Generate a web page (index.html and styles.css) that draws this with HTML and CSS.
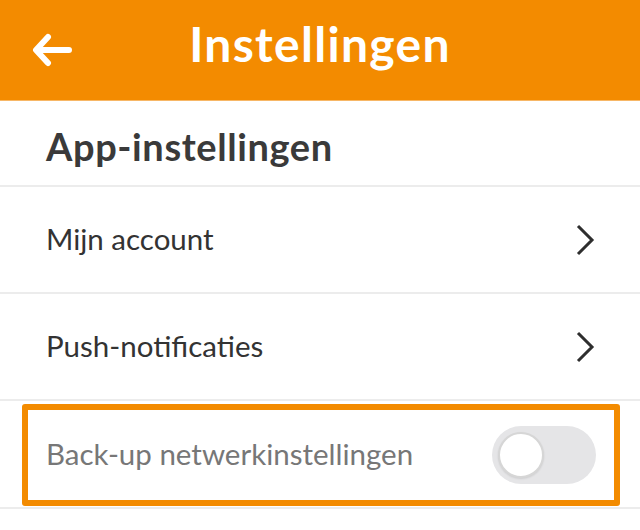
FILE: index.html
```html
<!DOCTYPE html>
<html lang="nl">
<head>
<meta charset="utf-8">
<link rel="stylesheet" href="styles.css">
</head>
<body>
<header class="topbar">
  <span class="back">
    <svg width="42" height="34" viewBox="0 0 42 34"><path d="M38 17H6M17 4L5 17l12 13" fill="none" stroke="#fff" stroke-width="6" stroke-linecap="round" stroke-linejoin="round"/></svg>
  </span>
  <h1 class="title">Instellingen</h1>
</header>
<section class="section-head">App-instellingen</section>
<div class="row">
  <span class="label">Mijn account</span>
  <svg class="chev" width="20" height="32" viewBox="0 0 20 32"><path d="M3 2l14 14L3 30" fill="none" stroke="#2e2e2e" stroke-width="3"/></svg>
</div>
<div class="row">
  <span class="label">Push-notificaties</span>
  <svg class="chev" width="20" height="32" viewBox="0 0 20 32"><path d="M3 2l14 14L3 30" fill="none" stroke="#2e2e2e" stroke-width="3"/></svg>
</div>
<div class="row-wrap">
  <div class="highlight">
    <span class="label muted">Back-up netwerkinstellingen</span>
    <span class="toggle"><span class="knob"></span></span>
  </div>
</div>
</body>
</html>
```

FILE: styles.css
```css
* { box-sizing: border-box; margin: 0; padding: 0; }
html, body { width: 640px; height: 530px; background: #fff; overflow: hidden; }
body { font-family: Lato, "Open Sans", sans-serif; color: #333; }
.topbar {
  height: 101px;
  background: #f38b00;
  border-bottom: 1px solid #f7b766;
  display: flex;
  align-items: center;
  justify-content: center;
  position: relative;
}
.back { position: absolute; left: 31px; top: 33px; display: flex; }
.title {
  color: #fff;
  font-weight: 700;
  font-size: 48px;
  letter-spacing: 1.3px;
  margin-top: -13px;
}
.section-head {
  height: 86px;
  padding: 22px 0 0 46px;
  font-weight: 700;
  font-size: 38px;
  letter-spacing: 0.6px;
  color: #3a3a3a;
  border-bottom: 2px solid #ececec;
}
.row {
  height: 107px;
  display: flex;
  align-items: center;
  justify-content: space-between;
  padding: 0 45px 0 46px;
  border-bottom: 2px solid #ececec;
}
.label { font-size: 29.5px; color: #333; margin-top: -3px; }
.label.muted { color: #777; }
.row-wrap {
  height: 108px;
  padding: 3px 20px 0 22px;
  border-bottom: 2px solid #ececec;
}
.highlight {
  height: 102px;
  border: 6px solid #f38b00;
  border-radius: 3px;
  display: flex;
  align-items: center;
  justify-content: space-between;
  padding: 0 18px 0 18px;
}
.toggle {
  width: 104px;
  height: 58px;
  border-radius: 29px;
  background: #e5e5e7;
  display: flex;
  align-items: center;
  padding-left: 6px;
}
.knob {
  width: 46px;
  height: 46px;
  border-radius: 50%;
  background: #fff;
  border: 2px solid #d6d6d6;
  box-shadow: 0 1px 2px rgba(0,0,0,0.1);
}
```
